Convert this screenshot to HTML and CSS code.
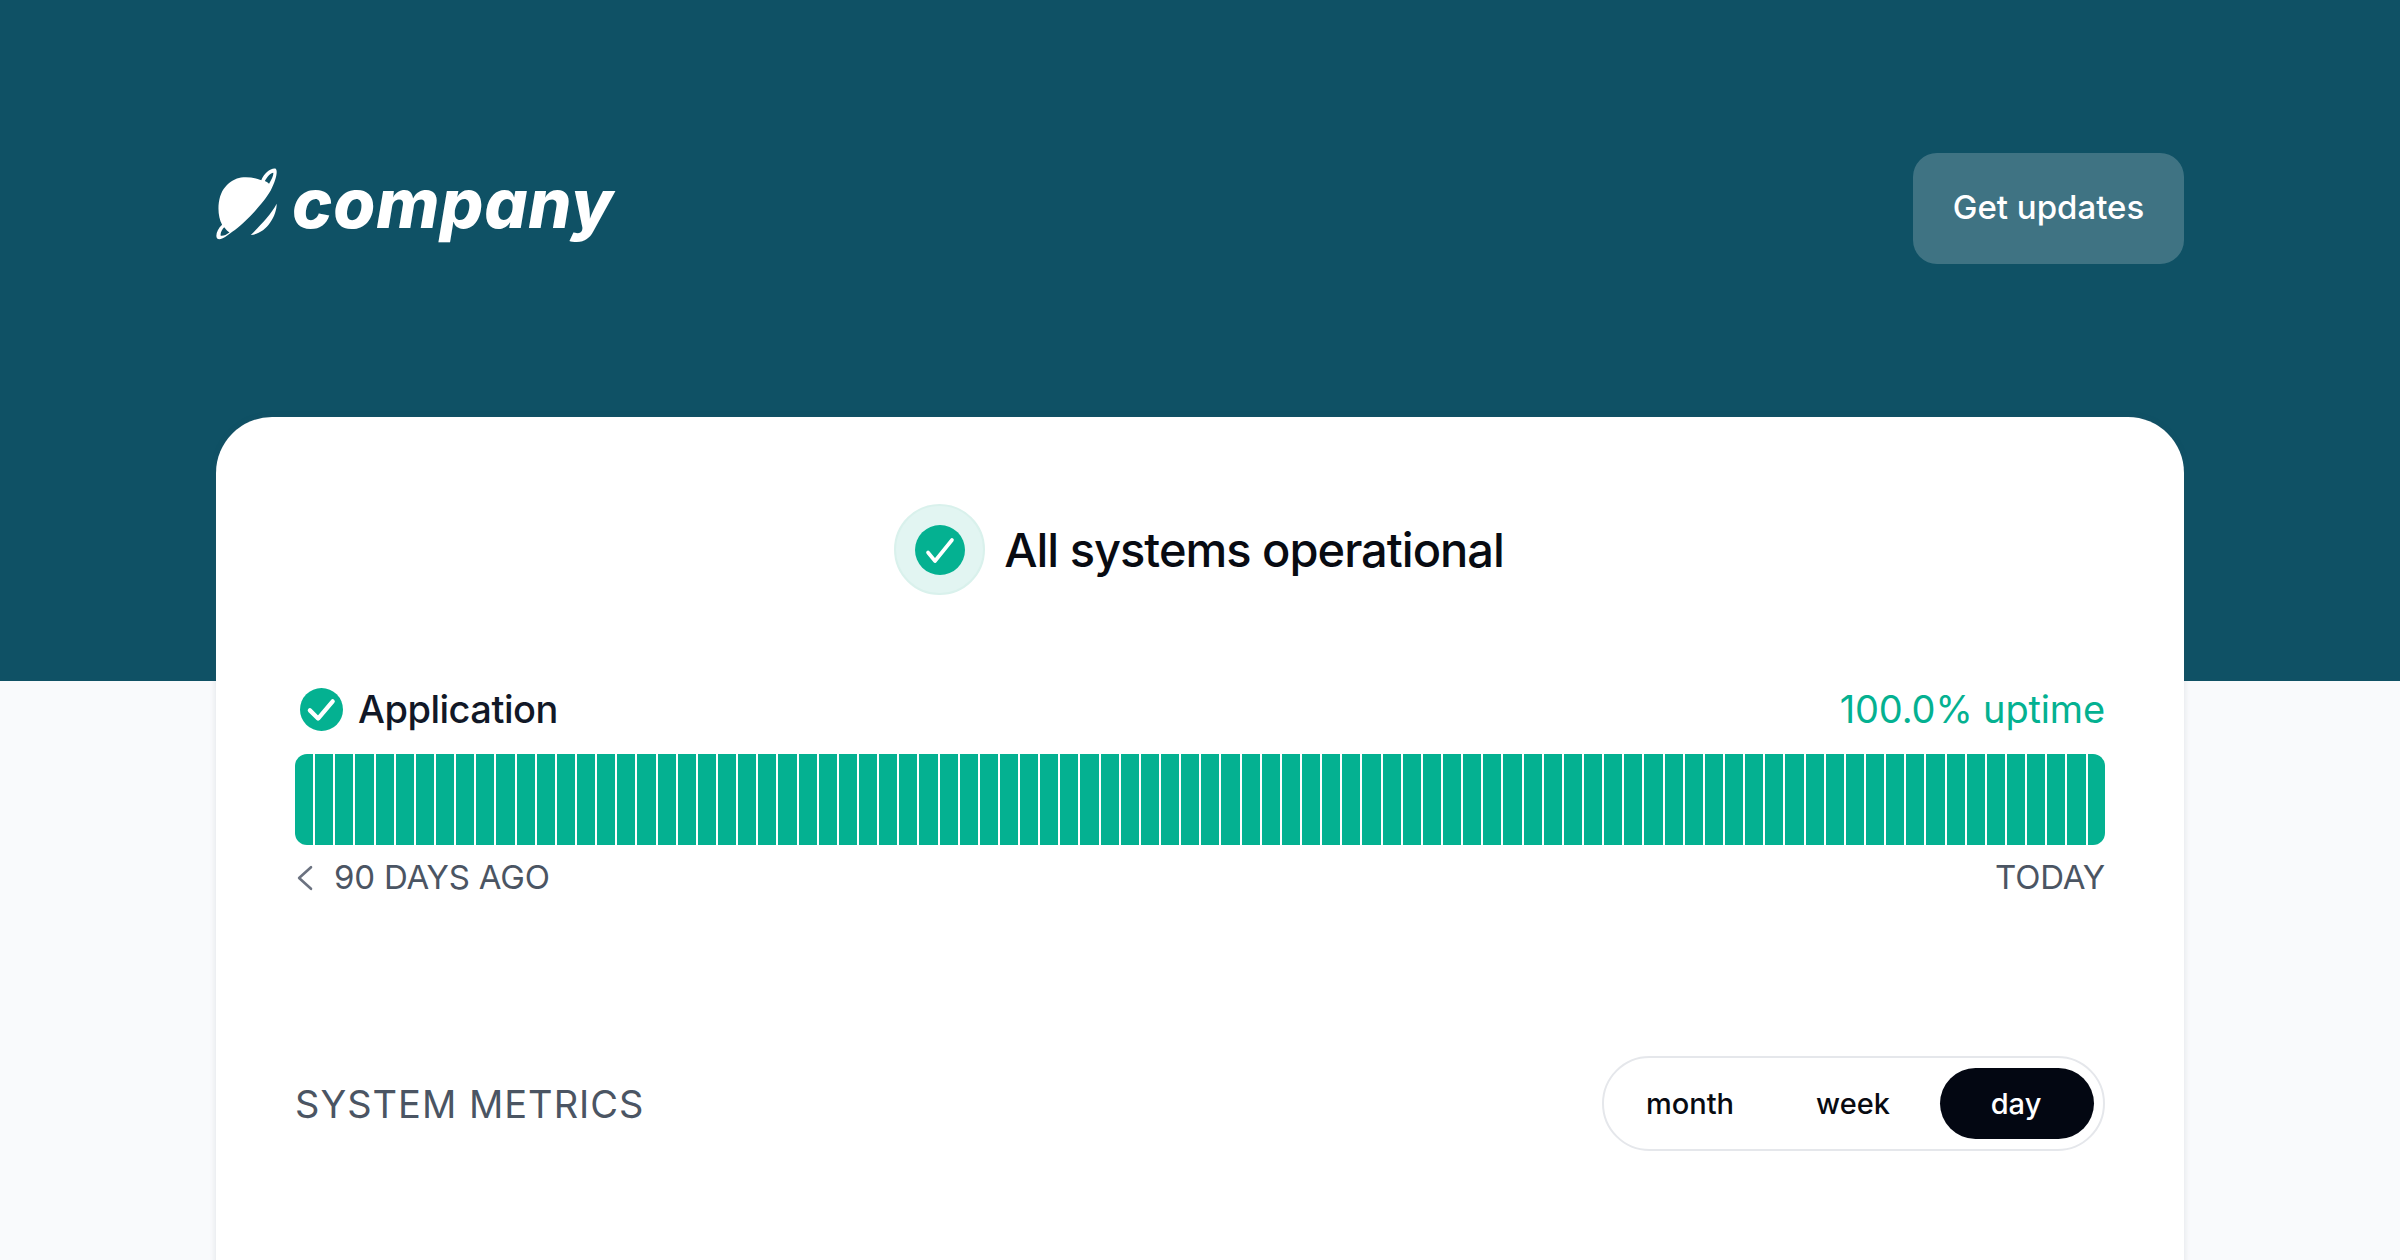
FILE: index.html
```html
<!DOCTYPE html>
<html lang="en">
<head>
    <meta charset="UTF-8">
    <title>Status</title>
    <link rel="stylesheet" href="styles.css">
</head>
<body>
    <header class="hero">
        <div class="logo">
            <svg class="logo-mark" viewBox="0 0 100 90" aria-hidden="true">
                <path fill="#fff" fill-rule="evenodd" d="M40 19.3C46.7 18.7 53.300 19.3 59.300 22C61.700 15 68.300 10 72.700 10.700C75.300 12 74 20.700 68.300 31.700C61.700 43.300 43.300 63.300 31.700 71C26.700 75 20 80 17.300 77.300C15.300 75 17.300 68.300 22 64.300C16.700 55 17.300 36.700 25 28.300C29.300 23.300 35 20 40 19.300ZM62.700 22.700C65 18.300 68.300 15 70.700 14.700C71.300 16.700 69.300 20.700 66.700 25.300C65.300 24 64 23.300 62.700 22.700ZM24 66.700C26 69.300 27.300 70.700 29 71.700C26 74 22.700 75.300 20.700 74.700C20 72.700 22 68.700 24 66.700Z"/>
                <path fill="#fff" d="M74 44.300C74 56.700 63.300 73.300 49.300 74C58.300 65 68.300 55 74 44.300Z"/>
            </svg>
            <span class="logo-text">company</span>
        </div>
        <a class="updates-btn">Get updates</a>
    </header>

    <main class="card">
        <div class="overall">
            <div class="overall-ring">
                <svg class="check" viewBox="0 0 50 50"><circle cx="25" cy="25" r="25"/><path d="M13 27.500L20 36L37 15"/></svg>
            </div>
            <h1>All systems operational</h1>
        </div>

        <section class="service">
            <div class="service-head">
                <div class="service-name">
                    <svg class="check small" viewBox="0 0 50 50"><circle cx="25" cy="25" r="25"/><path d="M11.500 26L21 35.500L38 15.500"/></svg>
                    <span class="service-label">Application</span>
                </div>
                <span class="uptime">100.0% uptime</span>
            </div>
            <div class="bars">
                <i></i><i></i><i></i><i></i><i></i><i></i><i></i><i></i><i></i><i></i>
                <i></i><i></i><i></i><i></i><i></i><i></i><i></i><i></i><i></i><i></i>
                <i></i><i></i><i></i><i></i><i></i><i></i><i></i><i></i><i></i><i></i>
                <i></i><i></i><i></i><i></i><i></i><i></i><i></i><i></i><i></i><i></i>
                <i></i><i></i><i></i><i></i><i></i><i></i><i></i><i></i><i></i><i></i>
                <i></i><i></i><i></i><i></i><i></i><i></i><i></i><i></i><i></i><i></i>
                <i></i><i></i><i></i><i></i><i></i><i></i><i></i><i></i><i></i><i></i>
                <i></i><i></i><i></i><i></i><i></i><i></i><i></i><i></i><i></i><i></i>
                <i></i><i></i><i></i><i></i><i></i><i></i><i></i><i></i><i></i><i></i>
            </div>
            <div class="range">
                <div class="range-start">
                    <svg class="chevron" viewBox="0 0 16 24"><path d="M14 2L3 12l11 10"/></svg>
                    <span>90 DAYS AGO</span>
                </div>
                <span>TODAY</span>
            </div>
        </section>

        <section class="metrics">
            <h2>SYSTEM METRICS</h2>
            <div class="toggle">
                <button>month</button>
                <button>week</button>
                <button class="active">day</button>
            </div>
        </section>
    </main>
</body>
</html>
```

FILE: styles.css
```css
html, body {
    height: 1260px;
    overflow: hidden;
}
body {
    margin: 0;
    background-color: #f9fafc;
    font-family: Inter, "Liberation Sans", sans-serif;
}
.hero {
    height: 681px;
    box-sizing: border-box;
    padding: 153px 216px 0;
    background-color: #0f5165;
    display: flex;
    justify-content: space-between;
    align-items: flex-start;
}
.logo {
    display: flex;
    align-items: center;
    height: 111px;
}
.logo-mark {
    width: 105px;
    height: 95px;
    margin-left: -17px;
    margin-right: -12px;
    margin-top: -8px;
}
.logo-text {
    color: white;
    font-size: 68px;
    font-weight: 800;
    font-style: italic;
    font-feature-settings: "cv11";
    letter-spacing: 0.8px;
    line-height: 1;
    margin-top: -12px;
}
.updates-btn {
    width: 271px;
    height: 111px;
    box-sizing: border-box;
    padding-bottom: 4px;
    border-radius: 24px;
    background-color: rgba(255,255,255,0.2);
    color: white;
    font-size: 33px;
    font-weight: 500;
    display: flex;
    align-items: center;
    justify-content: center;
}
.card {
    margin: -264px 216px 0;
    height: 900px;
    box-sizing: border-box;
    padding: 87px 79px 0;
    background: white;
    border-radius: 56px;
    box-shadow: 0 0 6px rgba(60,70,90,0.14);
}
.overall {
    display: flex;
    align-items: center;
    justify-content: center;
    gap: 19px;
    height: 91px;
    margin-right: 2px;
}
.overall-ring {
    width: 91px;
    height: 91px;
    box-sizing: border-box;
    border: 2px solid #d9f1ec;
    border-radius: 50%;
    background-color: #e2f5f2;
    display: flex;
    align-items: center;
    justify-content: center;
}
.check {
    width: 50px;
    height: 50px;
    display: block;
}
.check circle {
    fill: #04b191;
}
.check path {
    fill: none;
    stroke: white;
    stroke-width: 3.6;
    stroke-linecap: round;
    stroke-linejoin: round;
}
.check.small {
    width: 43px;
    height: 43px;
}
.check.small path {
    stroke-width: 5;
}
h1 {
    margin: 0;
    font-size: 47px;
    font-weight: 450;
    letter-spacing: -1px;
    color: #080b12;
}
.service {
    margin-top: 88px;
}
.service-head {
    display: flex;
    justify-content: space-between;
    align-items: center;
    height: 53px;
}
.service-name {
    display: flex;
    align-items: center;
    gap: 15px;
    padding-left: 5px;
    font-size: 38px;
    font-weight: 450;
    letter-spacing: -0.5px;
    color: #111827;
}
.service-label {
    padding-bottom: 2px;
}
.uptime {
    color: #04b191;
    font-size: 38px;
    letter-spacing: -0.15px;
    padding-bottom: 2px;
}
.bars {
    display: flex;
    gap: 2px;
    height: 91px;
    margin-top: 18px;
    border-radius: 12px;
    overflow: hidden;
}
.bars i {
    flex: 1;
    background-color: #04b191;
}
.range {
    display: flex;
    justify-content: space-between;
    align-items: center;
    height: 42px;
    margin-top: 11px;
    font-size: 33px;
    letter-spacing: -0.2px;
    color: #4b5563;
}
.range-start {
    display: flex;
    align-items: center;
    gap: 20px;
}
.chevron {
    width: 19px;
    height: 26px;
    margin-top: 2px;
}
.chevron path {
    fill: none;
    stroke: #6b7280;
    stroke-width: 2.4;
    stroke-linecap: round;
    stroke-linejoin: round;
}
.metrics {
    display: flex;
    justify-content: space-between;
    align-items: center;
    margin-top: 158px;
}
h2 {
    margin: 0;
    font-size: 38px;
    font-weight: 400;
    letter-spacing: 1px;
    color: #4b5563;
}
.toggle {
    display: flex;
    gap: 9px;
    padding: 10px 9px 10px 10px;
    border: 2px solid #e5e7eb;
    border-radius: 48px;
}
.toggle button {
    width: 154px;
    height: 71px;
    border: none;
    border-radius: 36px;
    background: none;
    color: #080b12;
    font-family: inherit;
    font-size: 29px;
    font-weight: 450;
    padding: 0 2px 0 0;
}
.toggle button.active {
    background-color: #030712;
    color: white;
}
```
